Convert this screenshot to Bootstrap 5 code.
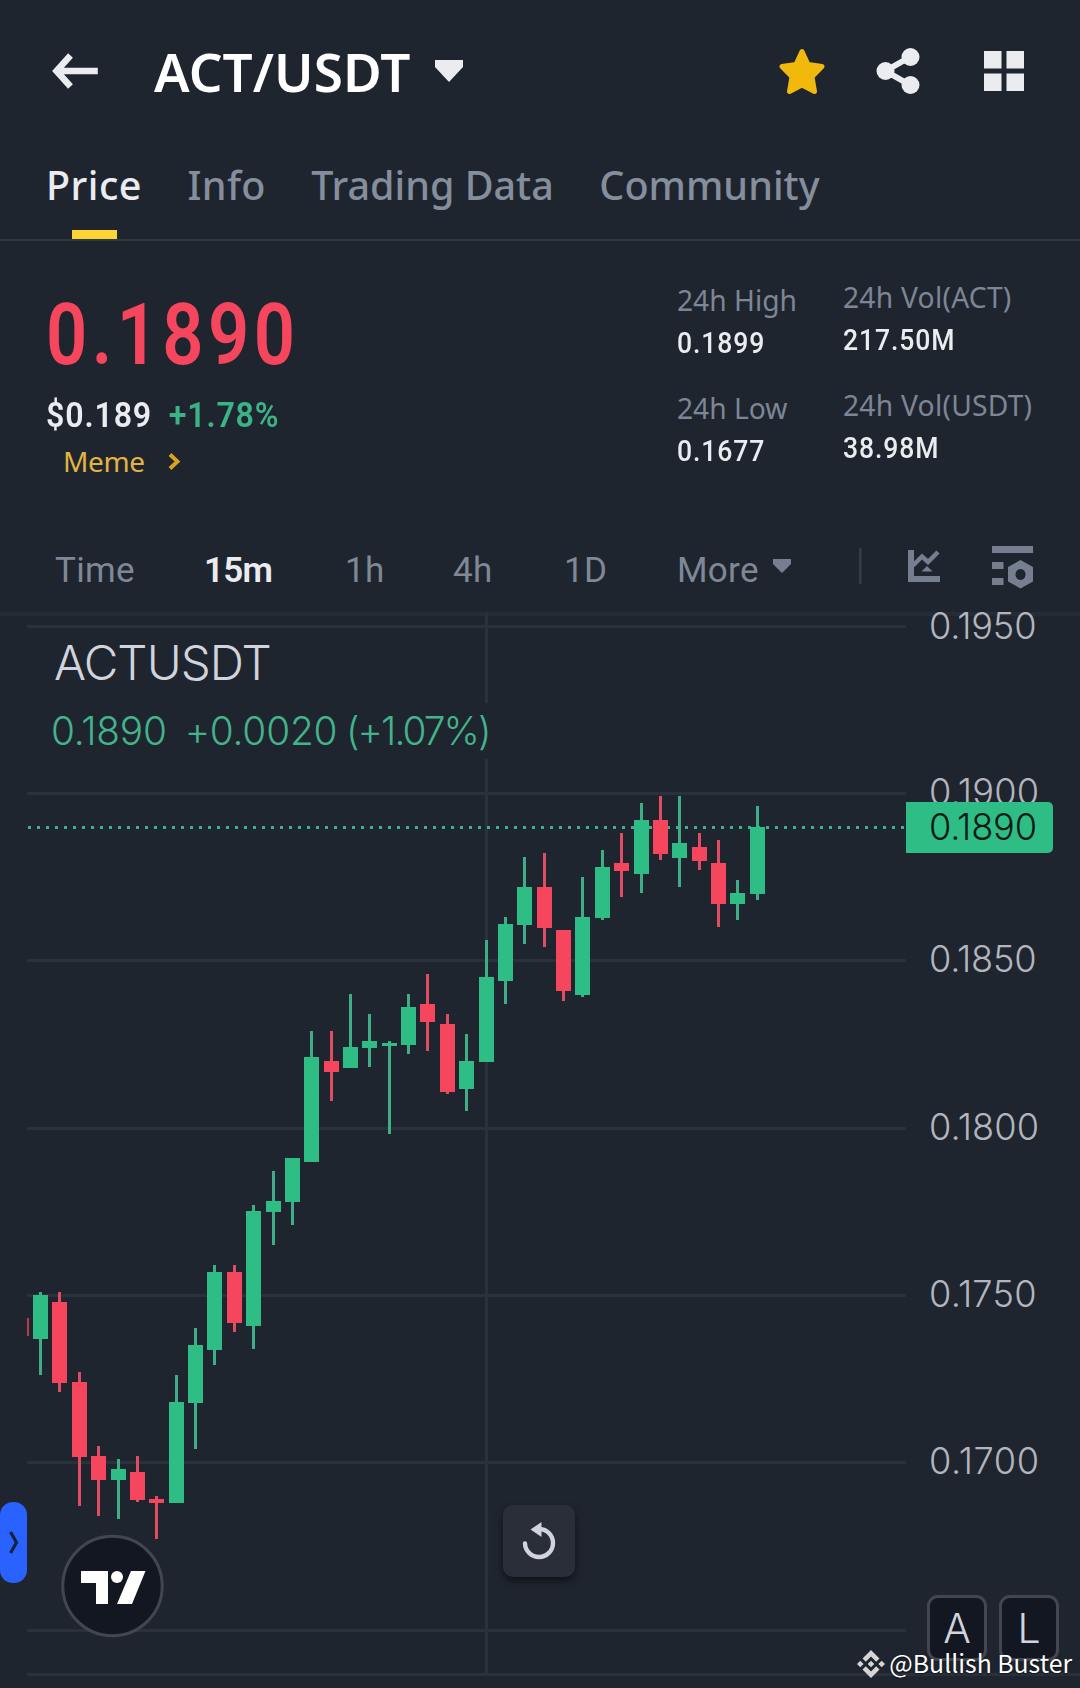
<!DOCTYPE html>
<html lang="en" data-bs-theme="dark">
<head>
<meta charset="utf-8">
<meta name="viewport" content="width=device-width, initial-scale=1">
<title>ACT/USDT</title>
<link href="https://cdn.jsdelivr.net/npm/bootstrap@5.3.0/dist/css/bootstrap.min.css" rel="stylesheet">
<style>
  :root { --app-bg:#1f252f; --txt:#eaecef; --muted:#848e9c; --up:#2ebd85; --down:#f6465d; --rule:#323842; }
  body { background:var(--app-bg); color:var(--txt); font-family:"Noto Sans",sans-serif; width:1080px; height:1688px; overflow:hidden; }
  svg { display:block; flex:none; }
  .topbar { height:142px; padding:0 56px 0 50px; }
  .pair-name { font-size:53px; font-weight:600; line-height:72px; letter-spacing:.1px; color:#fff; margin:2px 0 0 54px; }
  .page-tabs { height:99px; padding-left:46px; gap:45.5px; border-bottom:2px solid var(--rule); }
  .page-tabs .nav-link { padding:0; font-size:39.5px; font-weight:500; line-height:87px; height:97px; color:var(--muted); position:relative; }
  .page-tabs .nav-link.active { color:var(--txt); }
  .page-tabs .nav-link.active::after { content:""; position:absolute; left:50%; bottom:0; width:45px; height:9px; margin-left:-22.5px; background:#fcd535; }
  .digits { font-family:Roboto,sans-serif; }
  .summary { height:287px; padding:51px 0 0 46px; }
  .price-col { width:631px; }
  .last-price { font-size:85px; font-weight:600; line-height:86px; color:var(--down); letter-spacing:5.2px; transform:scaleX(.85); transform-origin:left; }
  .sub-price { font-size:35px; font-weight:600; line-height:38px; margin-top:19px; letter-spacing:.9px; transform:scaleX(.92); transform-origin:left; gap:18px; }
  .tag-link { font-size:28px; line-height:34px; margin:9px 0 0 17px; gap:23px; color:#e3b341; letter-spacing:-.4px; }
  .stat-col { line-height:40px; font-size:28.2px; margin-top:-12px; width:166px; }
  .stat-col.shifted { margin-top:-15px; width:220px; letter-spacing:.25px; }
  .stat-name { color:#7d8694; white-space:nowrap; }
  .stat-num { font-family:Roboto,sans-serif; font-size:29.5px; font-weight:500; margin:3px 0 25px; letter-spacing:1px; transform:scaleX(.9); transform-origin:left; }
  .intervals { height:84px; padding-left:55px; font-family:Roboto,sans-serif; font-size:35px; color:#7f8896; line-height:85px; }
  .intervals span { letter-spacing:.3px; }
  .chart-area { height:1076px; font-family:Inter,sans-serif; font-weight:300; }
  .chart-area > svg { overflow:visible; }
  .legend-box { left:27px; top:23px; padding-left:27px; }
  .legend-sym { font-size:47.5px; line-height:56px; color:#d1d4dc; letter-spacing:-.9px; }
  .legend-vals { font-size:38.8px; line-height:56px; margin:12px 0 0 -3px; color:#42b38a; background:var(--app-bg); gap:18px; letter-spacing:-.2px; }
  .float-btn { width:60px; height:66px; border:3px solid #434651; border-radius:11px; background:#131722; color:#d1d4dc; font-size:41px; line-height:61px; padding:0; font-weight:300; top:983px; }
  .watermark { right:8px; bottom:6px; gap:4px; font-family:"Noto Sans CJK SC",sans-serif; font-weight:400; font-size:24.8px; line-height:40px; color:#fff; text-shadow:0 1px 2px #000a; }
  .watermark svg { margin-top:4px; }
</style>
</head>
<body>
<header class="topbar d-flex align-items-center">
  <svg width="50" height="42" viewBox="50 50 50 42" fill="none" stroke="#eaecef" stroke-width="6.5"><path d="M97.800 71H57M70.500 55.500 56.500 71l14 15.500"/></svg>
  <h1 class="pair-name">ACT/USDT</h1>
  <svg class="ms-4" width="28" height="22" viewBox="0 0 28 22"><path d="M0 0h28v7L14 22 0 7z" fill="#eaecef"/></svg>
  <svg class="ms-auto" style="margin-top:2px" width="46" height="48" viewBox="0 0 46 48"><path d="M23 3.500 29 16.500 43 18.500 33 28.800 35.500 43.500 23 37 10.500 43.500 13 28.800 3 18.500 17 16.500z" fill="#f0b90b" stroke="#f0b90b" stroke-width="5" stroke-linejoin="round"/></svg>
  <svg style="margin-left:51px" width="44" height="46" viewBox="0 0 44 46" fill="#eaecef"><path d="M34 9 9.500 23 34 37" fill="none" stroke="#eaecef" stroke-width="6"/><circle cx="9.500" cy="23" r="9"/><circle cx="34.500" cy="9" r="9"/><circle cx="34.500" cy="37" r="9"/></svg>
  <svg style="margin-left:64px" width="40" height="40" viewBox="0 0 40 40" fill="#eaecef"><path d="M0 0h17.500v17.500H0zM22.500 0H40v17.500H22.500zM0 22.500h17.500V40H0zM22.500 22.500H40V40H22.500z"/></svg>
</header>

<nav class="nav page-tabs flex-nowrap">
  <a class="nav-link active" style="letter-spacing:.5px">Price</a>
  <a class="nav-link" style="letter-spacing:.3px">Info</a>
  <a class="nav-link">Trading Data</a>
  <a class="nav-link">Community</a>
</nav>

<section class="summary d-flex align-items-start">
  <div class="price-col">
    <div class="last-price digits">0.1890</div>
    <div class="sub-price digits d-flex"><span>$0.189</span><span style="color:#3db287">+1.78%</span></div>
    <div class="tag-link d-flex align-items-center">Meme
      <svg width="13" height="17" viewBox="0 0 13 17" fill="none" stroke="#d9a520" stroke-width="3.800"><path d="M2 1.500 9.500 8.500 2 15.500"/></svg>
    </div>
  </div>
  <div class="stat-col">
    <div class="stat-name">24h High</div><div class="stat-num">0.1899</div>
    <div class="stat-name">24h Low</div><div class="stat-num">0.1677</div>
  </div>
  <div class="stat-col shifted">
    <div class="stat-name">24h Vol(ACT)</div><div class="stat-num">217.50M</div>
    <div class="stat-name">24h Vol(USDT)</div><div class="stat-num">38.98M</div>
  </div>
</section>

<div class="intervals d-flex align-items-start">
  <span style="width:149px">Time</span>
  <span class="fw-semibold" style="width:141px;color:#eaecef;letter-spacing:-.8px">15m</span>
  <span style="width:108px">1h</span>
  <span style="width:111px">4h</span>
  <span style="width:113px">1D</span>
  <span style="width:80px">More</span>
  <svg style="margin:31px 0 0 16px" width="18" height="14" viewBox="0 0 18 14"><path d="M0 0h18v5L9 14 0 5z" fill="#767f8f"/></svg>
  <svg style="margin:20px 0 0 68px" width="3" height="36"><path d="M0 0h2.500v36H0z" fill="#353c47"/></svg>
  <svg style="margin:22px 0 0 46px" width="33" height="32" viewBox="0 0 33 32"><path d="M0 0h6v26h26v6H0z" fill="#767f8f"/><path d="M5 15.500 14 6.500l6 5.500L30 2" fill="none" stroke="#767f8f" stroke-width="4.500"/><path d="M13.500 21.500 19 16l5.500 5.500z" fill="#767f8f"/></svg>
  <svg style="margin:18px 0 0 51px" width="42" height="43" viewBox="0 0 42 43" fill="#767f8f"><path d="M0 0h41v7H0zM0 16h11.500v7H0zM0 32h11.500v7H0z"/><path fill-rule="evenodd" d="M28.500 14 41 21v14.500l-12.500 7L16 35.500V21zm0 9a5 5.500 0 1 0 .01 0z"/></svg>
</div>

<main class="chart-area position-relative">
  <svg id="chart" width="1080" height="1076" viewBox="0 612 1080 1076" shape-rendering="crispEdges">
    <g id="grid" fill="#2b313b">
      <path d="M0 612h1080v4H0z" fill="#262c36"/>
      <path d="M485 613h3v1061h-3zM27 1673h1053v3H27z"/>
    </g>
    <g id="axis" fill="#b2b5be" font-size="36.200" shape-rendering="auto"></g>
    <path d="M28 827.500h876" stroke="#3db287" stroke-width="3" stroke-dasharray="3 6"/>
    <g id="candles"></g>
    <path d="M906 802h142a5 5 0 0 1 5 5v41a5 5 0 0 1-5 5H906z" fill="#2ebd85" shape-rendering="auto"/>
    <text x="929" y="840" font-size="36.200" fill="#0b1a14" textLength="108">0.1890</text>
  </svg>

  <div class="legend-box position-absolute">
    <div class="legend-sym">ACTUSDT</div>
    <div class="legend-vals d-flex"><span>0.1890</span><span>+0.0020 <span style="letter-spacing:-1.900px;margin-left:-2px">(+1.07%)</span></span></div>
  </div>

  <svg class="position-absolute" style="left:0;top:890px" width="27" height="81" viewBox="0 0 27 81"><rect width="27" height="81" rx="13" fill="#2962ff"/><path d="M10.500 30 16.500 40.500 10.500 51" fill="none" stroke="#15203c" stroke-width="3.200"/></svg>

  <svg class="position-absolute" style="left:61px;top:922px" width="103" height="104" viewBox="61 1534 103 104"><circle cx="112.500" cy="1586" r="49.700" fill="#131722" stroke="#434651" stroke-width="3"/><path fill="#fff" d="M81 1571h27v33H96v-21H81zM131 1571h14.500L132 1604h-15z"/><circle cx="117" cy="1577" r="6" fill="#fff"/></svg>

  <svg class="position-absolute" style="left:503px;top:893px;filter:drop-shadow(0 4px 4px #0008)" width="72" height="72" viewBox="0 0 72 72"><rect width="72" height="72" rx="10" fill="#2a2e39"/><path d="M22 38.500a14 14 0 1 0 14.500-14.500" fill="none" stroke="#d1d4dc" stroke-width="4.400" stroke-linecap="round"/><path d="M38.500 17v15L27.500 24.500z" fill="#d1d4dc"/></svg>

  <button class="btn float-btn position-absolute" style="left:927px">A</button>
  <button class="btn float-btn position-absolute" style="left:999px">L</button>

  <div class="watermark position-absolute d-flex align-items-center">
    <svg width="28" height="28" viewBox="0 0 28 28" fill="#d5d5d5"><path d="M14 0l8.500 8.500-3.300 3.300L14 6.600l-5.200 5.200-3.300-3.300zM14 28l8.500-8.500-3.300-3.300L14 21.400l-5.200-5.200-3.300 3.300zM14 10.700l3.300 3.300-3.300 3.300-3.300-3.300zM3.300 10.700 6.600 14l-3.300 3.300L0 14zM24.700 10.700 28 14l-3.300 3.300-3.300-3.300z"/></svg>
    <span>@Bullish Buster</span>
  </div>
</main>

<script src="https://cdn.jsdelivr.net/npm/bootstrap@5.3.0/dist/js/bootstrap.bundle.min.js"></script>
<script>
  const NS = 'http://www.w3.org/2000/svg';
  function add(parent, tag, attrs, text) {
    const el = document.createElementNS(NS, tag);
    for (const k in attrs) el.setAttribute(k, attrs[k]);
    if (text) el.textContent = text;
    parent.appendChild(el);
  }
  const grid = document.getElementById('grid'), axis = document.getElementById('axis'), box = document.getElementById('candles');
  // price levels: [line y, label, label baseline]
  [[625,'0.1950',638.5],[792,'0.1900',805],[959,'0.1850',972],[1127,'0.1800',1140],[1294,'0.1750',1307],[1461,'0.1700',1474],[1629,'']].forEach(([y, label, base]) => {
    add(grid, 'rect', {x:27, y:y, width:879, height:3});
    if (label) add(axis, 'text', {x:929, y:base, textLength:/00$/.test(label) ? 110 : 107.5}, label);
  });
  // candles: [centre x, direction, wick top, wick bottom, body top, body bottom]
  const data = [
    [40.5,1,1292,1375,1295,1339],[59.5,0,1292,1392,1302,1383],[79.5,0,1372,1506,1382,1457],[98.5,0,1446,1516,1456,1480],
    [118.5,1,1459,1519,1469,1480],[137.5,0,1456,1502,1472,1500],[156.5,0,1496,1539,1499,1503],[176.5,1,1375,1503,1402,1503],
    [195.5,1,1328,1449,1345,1403],[214.5,1,1265,1365,1272,1350],[234.5,0,1265,1332,1272,1323],[253.5,1,1205,1349,1211,1326],
    [273.5,1,1171,1245,1201,1212],[292.5,1,1158,1225,1158,1202],[311.5,1,1031,1162,1057,1162],[331.5,0,1031,1101,1061,1072],
    [350.5,1,994,1068,1047,1068],[369.5,1,1014,1067,1041,1048],[389.5,1,1041,1134,1043,1046],[408.5,1,994,1054,1007,1045],
    [427.5,0,974,1051,1004,1022],[447.5,0,1014,1094,1024,1092],[466.5,1,1034,1111,1061,1089],[486.5,1,940,1062,977,1062],
    [505.5,1,917,1004,924,981],[524.5,1,857,944,887,925],[544.5,0,853,947,887,928],[563.5,0,930,1001,930,991],
    [582.5,1,877,997,917,995],[602.5,1,850,920,867,918],[621.5,0,833,897,863,871],[641.5,1,803,893,820,874],
    [660.5,0,796,860,820,854],[679.5,1,796,887,843,858],[699.5,0,833,870,847,861],[718.5,0,840,927,863,904],
    [737.5,1,880,920,893,904],[757.5,1,806,900,827,894]
  ];
  add(box, 'rect', {x:27, y:1318, width:2, height:18, fill:'#b13c50'});
  data.forEach(([x, up, wt, wb, bt, bb]) => {
    add(box, 'rect', {x:x - 1.5, y:wt, width:3, height:wb - wt, fill:up ? '#3fae86' : '#e04c63'});
    add(box, 'rect', {x:x - 7.5, y:bt, width:15, height:bb - bt, fill:up ? '#2ebd85' : '#f6465d'});
  });
</script>
</body>
</html>
